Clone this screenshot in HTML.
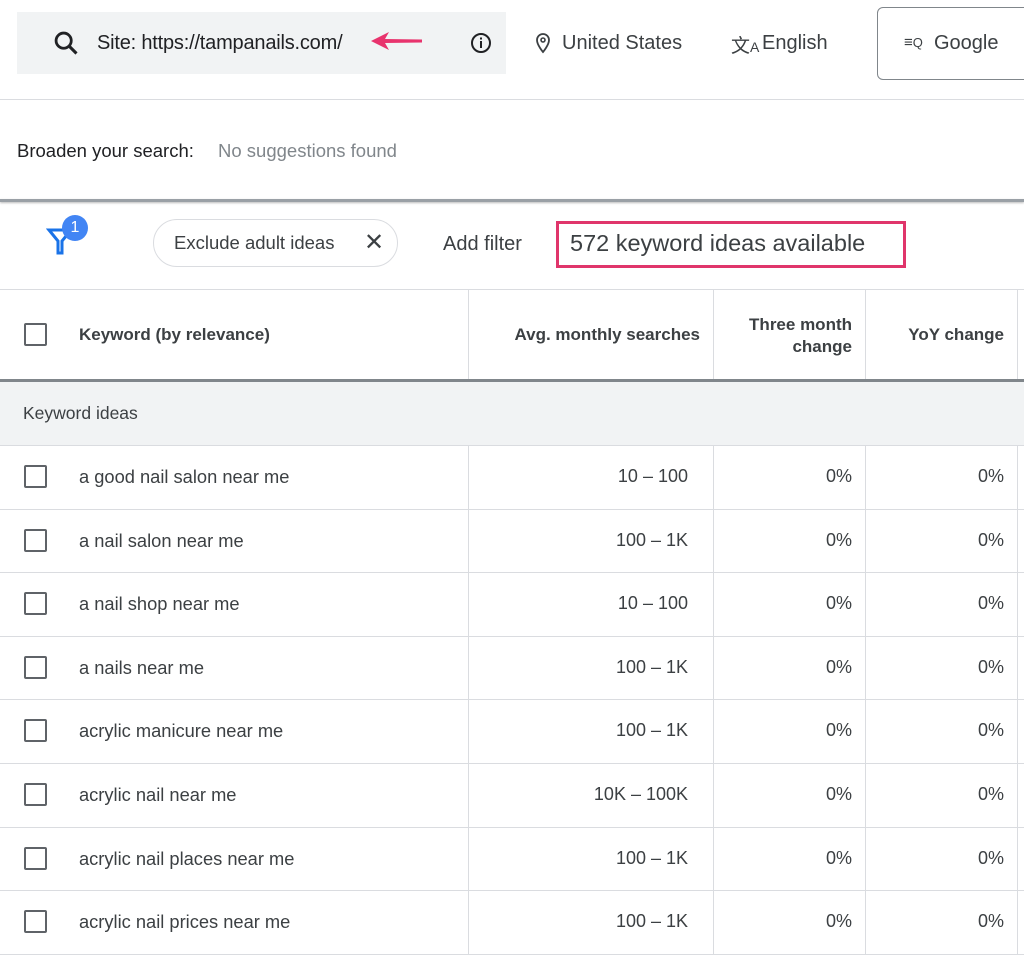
<!DOCTYPE html>
<html><head><meta charset="utf-8"><style>
*{margin:0;padding:0;box-sizing:border-box}
body{width:1024px;height:957px;overflow:hidden;background:#fff;font-family:"Liberation Sans",Arial,sans-serif;color:#3c4043;position:relative}
.a{position:absolute;white-space:nowrap}
.hl{position:absolute;left:0;width:1024px;height:1px;background:#dadce0}
.vl{position:absolute;width:1px;background:#dadce0}
.cb{position:absolute;left:24px;width:23px;height:23px;border:2px solid #5f6368;border-radius:2px}
.t{font-size:18px;color:#3c4043}
</style></head><body>
<div class="a" style="left:17px;top:12px;width:489px;height:62px;background:#f1f3f4"></div>
<svg class="a" style="left:52px;top:29px" width="28" height="28" viewBox="0 0 24 24"><circle cx="10" cy="10" r="6.5" fill="none" stroke="#202124" stroke-width="2.4"/><path d="M15 15l6 6" stroke="#202124" stroke-width="2.6"/></svg>
<div class="a t" style="left:97px;top:32px;color:#202124;font-size:20px;letter-spacing:-0.2px">Site: https://tampanails.com/</div>
<svg class="a" style="left:370px;top:30px" width="54" height="22" viewBox="0 0 54 22"><path d="M1 11L19 2L15 9L52 9.5L52 12.5L15 13L19 20Z" fill="#e8336d"/></svg>
<svg class="a" style="left:470px;top:32px" width="22" height="22" viewBox="0 0 22 22"><circle cx="11" cy="11" r="9" fill="none" stroke="#202124" stroke-width="2"/><rect x="10" y="9" width="2" height="7" fill="#202124"/><rect x="10" y="5.5" width="2" height="2" fill="#202124"/></svg>
<svg class="a" style="left:535px;top:32px" width="16" height="22" viewBox="0 0 16 22"><path d="M8 2a6 6 0 0 1 6 6c0 5-6 12-6 12S2 13 2 8a6 6 0 0 1 6-6z" fill="none" stroke="#3c4043" stroke-width="1.8"/><circle cx="8" cy="8" r="2" fill="none" stroke="#3c4043" stroke-width="1.6"/></svg>
<div class="a t" style="left:562px;top:32px;font-size:20px">United States</div>
<div class="a" style="left:731px;top:31px;font-size:19px;color:#3c4043">文<span style="font-size:14px">A</span></div>
<div class="a t" style="left:762px;top:32px;font-size:20px">English</div>
<div class="a" style="left:877px;top:7px;width:160px;height:73px;border:1.5px solid #80868b;border-radius:6px"></div>
<div class="a" style="left:904px;top:34px;font-size:15px;color:#3c4043">≡<span style="font-size:13px">Q</span></div>
<div class="a t" style="left:934px;top:32px;font-size:20px">Google</div>
<div class="hl" style="top:99px"></div>
<div class="a t" style="left:17px;top:140px;color:#202124;font-size:18.5px">Broaden your search:</div>
<div class="a t" style="left:218px;top:140px;color:#80868b;font-size:18.5px">No suggestions found</div>
<div class="hl" style="top:199px;height:3px;background:#9aa0a6;box-shadow:0 1px 2px #bbb"></div>
<svg class="a" style="left:46px;top:224px" width="28" height="32" viewBox="0 0 28 32"><path d="M3 6h22l-9 11v12h-4V17z" fill="none" stroke="#1a73e8" stroke-width="3"/></svg>
<div class="a" style="left:62px;top:215px;width:26px;height:26px;border-radius:50%;background:#4285f4;color:#fff;font-size:16px;text-align:center;line-height:26px">1</div>
<div class="a" style="left:153px;top:219px;width:245px;height:48px;border:1.5px solid #dadce0;border-radius:24px"></div>
<div class="a t" style="left:174px;top:232px;font-size:18.5px">Exclude adult ideas</div>
<div class="a" style="left:364px;top:228px;font-size:24px;color:#3c4043">✕</div>
<div class="a t" style="left:443px;top:233px;font-size:20px">Add filter</div>
<div class="a" style="left:556px;top:221px;width:350px;height:47px;border:3px solid #e0356b"></div>
<div class="a" style="left:570px;top:230px;font-size:23.5px;color:#3c4043">572 keyword ideas available</div>
<div class="hl" style="top:289px"></div>
<div class="vl" style="left:468px;top:290px;height:90px"></div>
<div class="vl" style="left:713px;top:290px;height:90px"></div>
<div class="vl" style="left:865px;top:290px;height:90px"></div>
<div class="vl" style="left:1017px;top:290px;height:90px"></div>
<div class="cb" style="top:323px"></div>
<div class="a" style="left:79px;top:325px;font-size:17px;font-weight:bold;color:#3c4043">Keyword (by relevance)</div>
<div class="a" style="right:324px;top:325px;font-size:17px;font-weight:bold;color:#3c4043">Avg. monthly searches</div>
<div class="a" style="right:172px;top:314px;font-size:17px;font-weight:bold;color:#3c4043;text-align:right;line-height:22px">Three month<br>change</div>
<div class="a" style="right:20px;top:325px;font-size:17px;font-weight:bold;color:#3c4043">YoY change</div>
<div class="hl" style="top:379px;height:3px;background:#80868b"></div>
<div class="a" style="left:0;top:382px;width:1024px;height:63px;background:#f1f3f4"></div>
<div class="a t" style="left:23px;top:403px;font-size:17.5px">Keyword ideas</div>
<div class="hl" style="top:445px"></div>
<div id="rows"></div>
<script>
var d=[["a good nail salon near me","10 – 100"],["a nail salon near me","100 – 1K"],["a nail shop near me","10 – 100"],["a nails near me","100 – 1K"],["acrylic manicure near me","100 – 1K"],["acrylic nail near me","10K – 100K"],["acrylic nail places near me","100 – 1K"],["acrylic nail prices near me","100 – 1K"]];
var h="";
d.forEach(function(r,i){var y=445+i*63.6;
h+='<div class="vl" style="left:468px;top:'+y+'px;height:64px"></div><div class="vl" style="left:713px;top:'+y+'px;height:64px"></div><div class="vl" style="left:865px;top:'+y+'px;height:64px"></div><div class="vl" style="left:1017px;top:'+y+'px;height:64px"></div>';
h+='<div class="cb" style="top:'+(y+20)+'px"></div>';
h+='<div class="a t" style="left:79px;top:'+(y+21)+'px;font-size:18.3px">'+r[0]+'</div>';
h+='<div class="a t" style="right:336px;top:'+(y+21)+'px">'+r[1]+'</div>';
h+='<div class="a t" style="right:172px;top:'+(y+21)+'px">0%</div>';
h+='<div class="a t" style="right:20px;top:'+(y+21)+'px">0%</div>';
h+='<div class="hl" style="top:'+(y+63.6)+'px"></div>';});
document.getElementById("rows").innerHTML=h;
</script>
</body></html>
